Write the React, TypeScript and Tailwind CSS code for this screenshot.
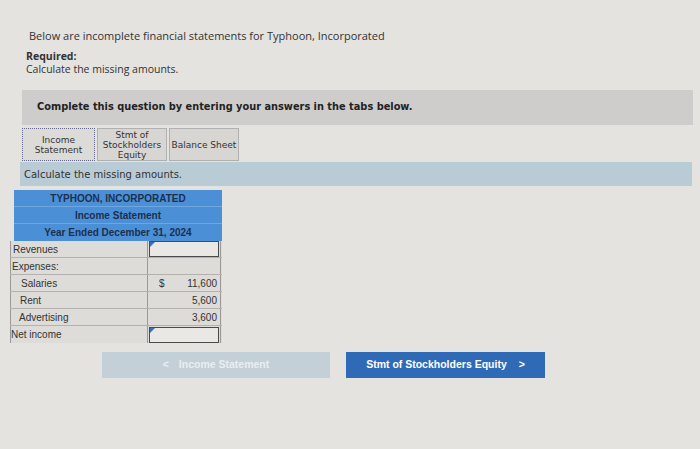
import React from "react";

const rows = [
  { label: "Revenues", indent: "pl-[2px]", input: true },
  { label: "Expenses:", indent: "pl-[1px]" },
  { label: "Salaries", indent: "pl-[10px]", dollar: true, value: "11,600" },
  { label: "Rent", indent: "pl-[9px]", value: "5,600" },
  { label: "Advertising", indent: "pl-[8px]", value: "3,600" },
  { label: "Net income", indent: "pl-0", input: true, wide: true },
];

function InputCell() {
  return (
    <div className="relative h-[16px] w-full border border-[#4a4a4a] bg-[#e9e8e5]">
      <span className="absolute left-0 top-0 h-0 w-0 border-l-[5px] border-b-[5px] border-l-[#3b6fb6] border-b-transparent" />
    </div>
  );
}

export default function App() {
  return (
    <div className="h-[449px] w-[700px] overflow-hidden bg-[#e5e3df] text-[#2a2a2a]">
      <div className="pl-[29px] pt-[29px] text-[11px] leading-[14px] text-[#333] [font-family:'Open_Sans',sans-serif]">
        Below are incomplete financial statements for Typhoon, Incorporated
      </div>
      <div className="pl-[26px] pt-[7px] text-[10.5px] leading-[13px] text-[#333] [font-family:'Open_Sans',sans-serif]">
        <div className="font-bold">Required:</div>
        <div>Calculate the missing amounts.</div>
      </div>

      <div className="ml-[22px] mt-[14px] flex h-[35px] w-[671px] items-center bg-[#cecdcb] pl-[15px] text-[9.8px] font-bold text-[#222] [font-family:'DejaVu_Sans',sans-serif]">
        Complete this question by entering your answers in the tabs below.
      </div>

      <div className="ml-[22px] mt-[3px] flex h-[33px] gap-[2px] text-[9px] leading-[10px] text-[#333] [font-family:'DejaVu_Sans',sans-serif]">
        <div className="flex w-[73px] items-center justify-center border border-dotted border-[#6a6a8a] bg-[#dcdbd8] text-center">
          Income<br />Statement
        </div>
        <div className="flex w-[70px] items-center justify-center border border-[#b0b0b0] bg-[#d7d6d3] text-center">
          Stmt of<br />Stockholders<br />Equity
        </div>
        <div className="flex w-[70px] items-center justify-center border border-[#b0b0b0] bg-[#d7d6d3] text-center">
          Balance Sheet
        </div>
      </div>

      <div className="ml-[20px] mt-[1px] flex h-[24px] w-[672px] items-center bg-[#b9cbd5] pl-[4px] text-[10px] text-[#333] [font-family:'DejaVu_Sans',sans-serif]">
        Calculate the missing amounts.
      </div>

      <div className="ml-[10px] mt-[4px] w-[212px] text-[10px] [font-family:'Liberation_Sans',sans-serif]">
        <div className="ml-[4px] w-[208px] bg-[#4b8fd7] font-bold text-[#1e2f4d]">
          <div className="flex h-[17px] items-center justify-center border-b border-[#6fa6e0]">TYPHOON, INCORPORATED</div>
          <div className="flex h-[17px] items-center justify-center border-b border-[#6fa6e0]">Income Statement</div>
          <div className="flex h-[17px] items-center justify-center">Year Ended December 31, 2024</div>
        </div>
        <div className="bg-[#dddcd8]">
          {rows.map((r, i) => (
            <div key={r.label} className={`flex h-[17px] border-b border-[#b3b2ae] ${i === rows.length - 1 ? "border-b-0" : ""}`}>
              <div className={`flex w-[138px] items-center border-l border-r border-[#9a9995] ${r.indent} text-[#333]`}>
                {r.label}
              </div>
              <div className="flex w-[73px] items-center border-r border-[#9a9995] px-[1px]">
                {r.input ? (
                  <InputCell />
                ) : r.value ? (
                  <div className="flex w-full items-center justify-between pl-[10px] pr-[2px] text-[#333]">
                    <span>{r.dollar ? "$" : ""}</span>
                    <span>{r.value}</span>
                  </div>
                ) : null}
              </div>
            </div>
          ))}
        </div>
      </div>

      <div className="ml-[102px] mt-[9px] flex gap-[16px] text-[10.5px] font-bold [font-family:'Liberation_Sans',sans-serif]">
        <div className="flex h-[26px] w-[228px] items-center justify-center gap-[10px] bg-[#c4d0d8] text-[#e9eef2]">
          <span>&lt;</span>
          <span>Income Statement</span>
        </div>
        <div className="flex h-[26px] w-[199px] items-center justify-center gap-[12px] bg-[#2f6ab7] text-white">
          <span>Stmt of Stockholders Equity</span>
          <span>&gt;</span>
        </div>
      </div>
    </div>
  );
}
